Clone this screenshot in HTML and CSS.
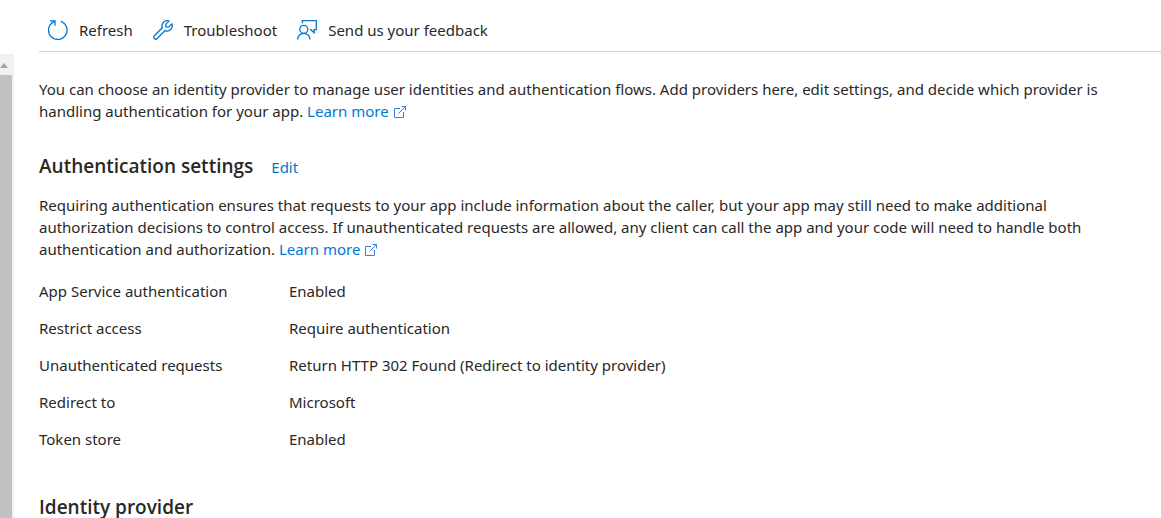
FILE: index.html
```html
<!DOCTYPE html>
<html lang="en">
<head>
  <meta charset="UTF-8">
  <meta name="viewport" content="width=device-width, initial-scale=1.0">
  <title>Authentication</title>
  <link rel="stylesheet" href="styles.css">
</head>
<body>
  <!-- Side menu scrollbar -->
  <div class="scrollbar">
    <div class="scroll-up">
      <svg viewBox="0 0 8 5"><path d="M0 5 4 0l4 5z"/></svg>
    </div>
    <div class="scroll-thumb"></div>
  </div>

  <div class="blade">
    <!-- Command bar -->
    <div class="toolbar">
      <button type="button" class="command">
        <svg class="command-icon" viewBox="0 0 20 20">
          <path d="M12.8 1.3A9.3 9.3 0 1 1 4.4 2.5M2 .8h5v5M7 .8 2.4 4.6"/>
        </svg>
        Refresh
      </button>
      <button type="button" class="command">
        <svg class="command-icon" viewBox="0 0 20 20">
          <path d="M16.1 1.1A5.2 5.2 0 0 0 9.3 7.8L1.4 15.7a1.95 1.95 0 0 0 2.8 2.8l7.9-7.9A5.2 5.2 0 0 0 18.9 3.9L15.6 7.1 13 6.8 12.7 4.4z"/>
        </svg>
        Troubleshoot
      </button>
      <button type="button" class="command">
        <svg class="command-icon" viewBox="0 0 20 20">
          <circle cx="6.8" cy="9.3" r="4"/>
          <path d="M.7 19.5c0-3.6 2.6-6.2 6.1-6.2s6.1 2.6 6.1 6.2M5.3 3.2V.7h14v9h-2.2v3L13.8 9.7h-1"/>
        </svg>
        Send us your feedback
      </button>
    </div>

    <main class="content">
      <p>
        You can choose an identity provider to manage user identities and authentication flows. Add providers here, edit settings, and decide which provider is handling authentication for your app.
        <a href="#">Learn more<svg class="external" viewBox="0 0 12 12"><path d="M6 2.5H.5v9h9V6M7.5.5h4v4M11.5.5l-7 7"/></svg></a>
      </p>

      <div class="section-title">
        <h2>Authentication settings</h2>
        <a href="#">Edit</a>
      </div>

      <p>
        Requiring authentication ensures that requests to your app include information about the caller, but your app may still need to make additional authorization decisions to control access. If unauthenticated requests are allowed, any client can call the app and your code will need to handle both authentication and authorization.
        <a href="#">Learn more<svg class="external" viewBox="0 0 12 12"><path d="M6 2.5H.5v9h9V6M7.5.5h4v4M11.5.5l-7 7"/></svg></a>
      </p>

      <dl class="settings">
        <dt>App Service authentication</dt>
        <dd>Enabled</dd>
        <dt>Restrict access</dt>
        <dd>Require authentication</dd>
        <dt>Unauthenticated requests</dt>
        <dd>Return HTTP 302 Found (Redirect to identity provider)</dd>
        <dt>Redirect to</dt>
        <dd>Microsoft</dd>
        <dt>Token store</dt>
        <dd>Enabled</dd>
      </dl>

      <h2>Identity provider</h2>
    </main>
  </div>
</body>
</html>
```

FILE: styles.css
```css
:root {
  --text-color: #292827;
  --link-color: #0078d4;
  --border-color: #cfcfcf;
}

* {
  margin: 0;
  padding: 0;
  box-sizing: border-box;
}

body {
  font-family: 'Segoe UI', 'Noto Sans', sans-serif;
  font-size: 15px;
  line-height: 22px;
  color: var(--text-color);
  background-color: #ffffff;
  display: flex;
  height: 100vh;
  overflow: hidden;
}

a {
  color: var(--link-color);
  text-decoration: none;
}

a:hover {
  text-decoration: underline;
}

/* Scrollbar */
.scrollbar {
  flex: none;
  width: 14px;
  margin-top: 54px;
  background-color: #f1f1f1;
  display: flex;
  flex-direction: column;
}

.scroll-up {
  height: 21px;
  padding-top: 9px;
}

.scroll-up svg {
  display: block;
  width: 8px;
  height: 5px;
  fill: #a3a3a3;
}

.scroll-thumb {
  flex: 1;
  width: 12px;
  background-color: #c1c1c1;
}

/* Command bar */
.blade {
  flex: 1;
  min-width: 0;
  padding-left: 25px;
}

.toolbar {
  display: flex;
  gap: 20px;
  height: 52px;
  padding: 8px 0 0 9px;
  border-bottom: 1px solid var(--border-color);
}

.command {
  display: flex;
  align-items: center;
  gap: 11px;
  font: inherit;
  color: inherit;
  background: none;
  border: none;
  white-space: nowrap;
  cursor: pointer;
}

.command-icon {
  width: 20px;
  height: 20px;
  fill: none;
  stroke: var(--link-color);
  stroke-width: 1.3;
}

/* Content */
.content {
  padding: 26px 24px 0 0;
}

h2 {
  font-family: 'Segoe UI', 'Open Sans', sans-serif;
  font-size: 19px;
  font-weight: 600;
  line-height: 28px;
}

.section-title {
  display: flex;
  align-items: baseline;
  gap: 18px;
  margin: 30px 0 14px;
}

.external {
  width: 12px;
  height: 12px;
  margin-left: 5px;
  vertical-align: -1px;
  fill: none;
  stroke: #3b7de0;
}

.settings {
  display: grid;
  grid-template-columns: 250px 1fr;
  row-gap: 15px;
  margin: 20px 0 43px;
}
```
